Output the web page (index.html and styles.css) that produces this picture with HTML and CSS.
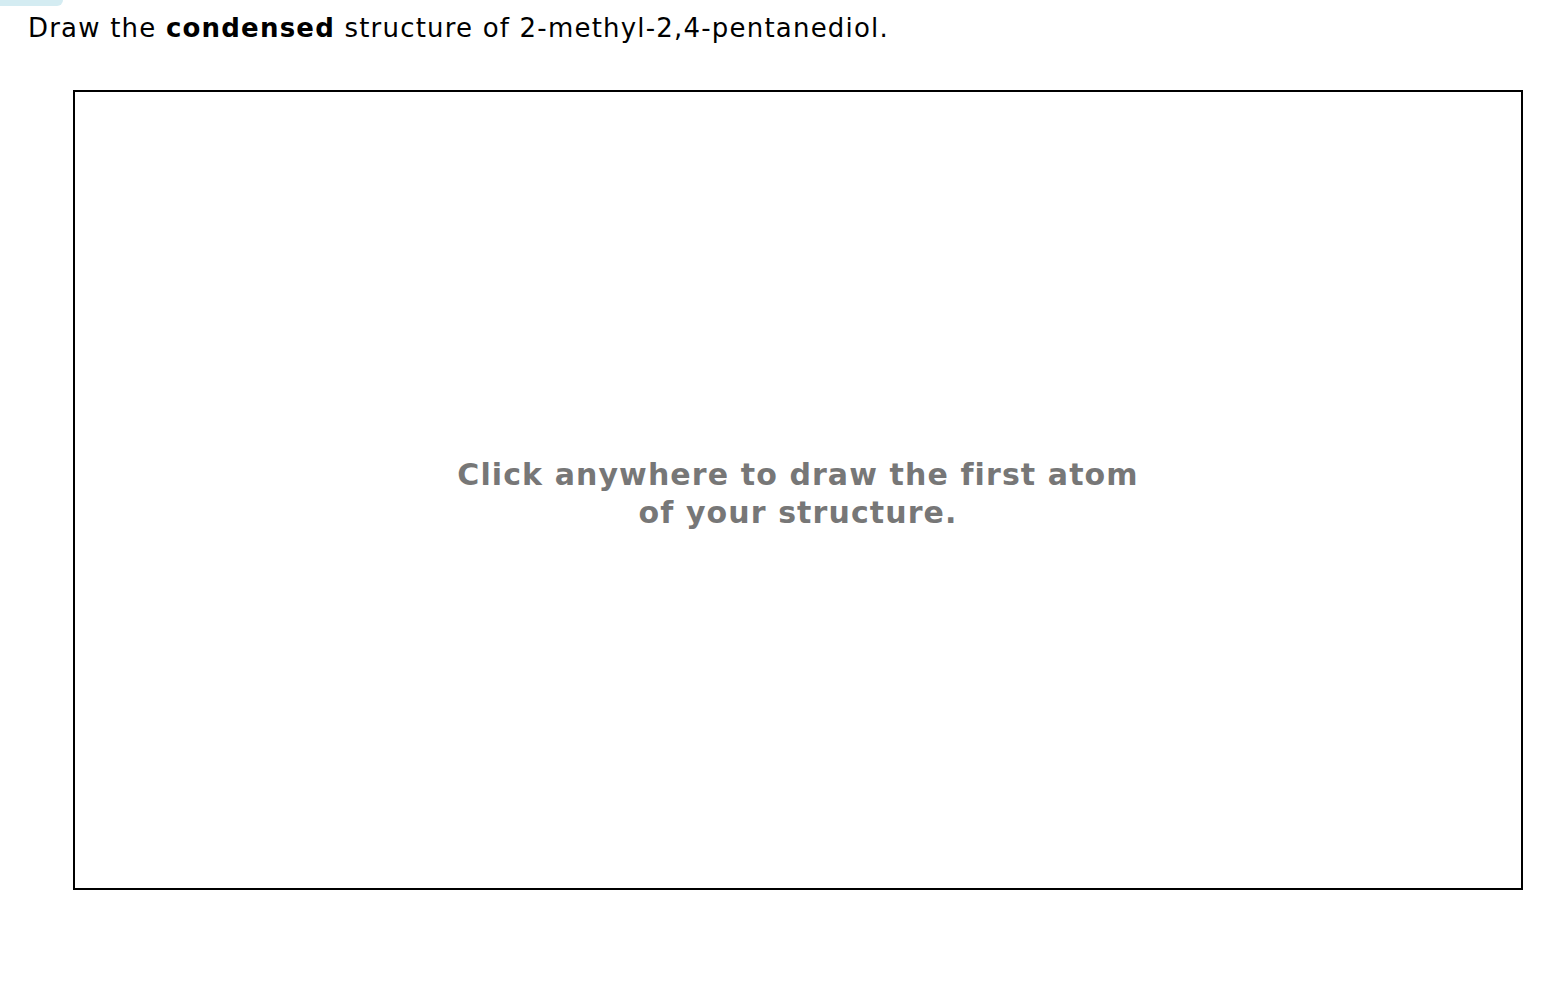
FILE: index.html
```html
<!DOCTYPE html>
<html>
<head>
<meta charset="utf-8">
<link rel="stylesheet" href="styles.css">
</head>
<body>
<div class="tab-edge"></div>
<div class="page">
  <p class="question">Draw the <b>condensed</b> structure of 2-methyl-2,4-pentanediol.</p>
  <div class="canvas">
    <div class="placeholder">Click anywhere to draw the first atom<br>of your structure.</div>
  </div>
</div>
</body>
</html>
```
FILE: styles.css
```css
html, body {
  margin: 0;
  padding: 0;
  background: #fff;
}
body {
  font-family: "DejaVu Sans", Verdana, sans-serif;
  color: #000;
  position: relative;
  width: 1548px;
  height: 992px;
  overflow: hidden;
}
.tab-edge {
  position: absolute;
  left: 0;
  top: 0;
  width: 63px;
  height: 6px;
  background: #d4ecf2;
  border-bottom-right-radius: 8px;
}
.page {
  padding: 12px 0 0 28px;
}
.question {
  margin: 0;
  font-size: 26px;
  letter-spacing: 1.2px;
  line-height: 33px;
}
.question b {
  font-weight: bold;
}
.canvas {
  box-sizing: border-box;
  margin: 45px 0 0 45px;
  width: 1450px;
  height: 800px;
  border: 2px solid #000;
  display: flex;
  align-items: center;
  justify-content: center;
}
.placeholder {
  font-size: 30px;
  font-weight: bold;
  letter-spacing: 1.1px;
  line-height: 38px;
  color: #777;
  text-align: center;
  padding-top: 7px;
}
```
